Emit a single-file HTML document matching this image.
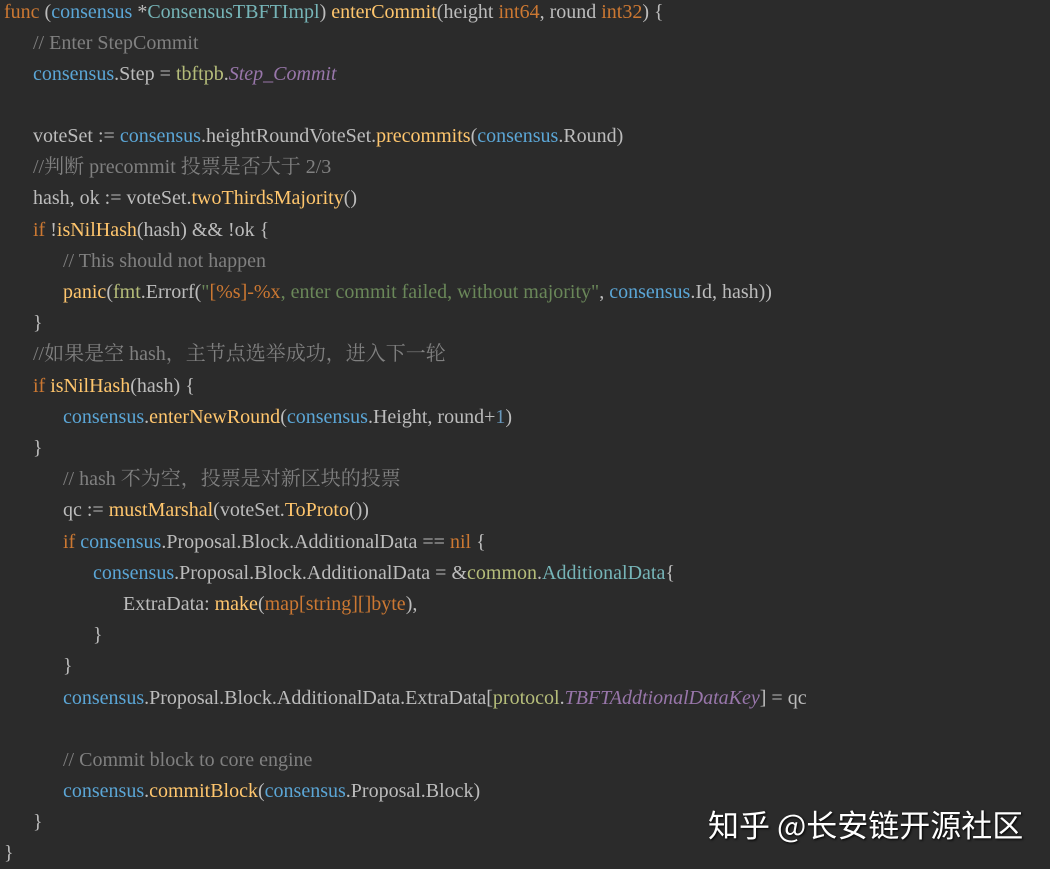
<!DOCTYPE html>
<html><head><meta charset="utf-8"><style>
body{margin:0;width:1050px;height:867px;background:#2b2b2b;overflow:hidden;position:relative;font-family:"Liberation Serif","Noto Serif CJK SC",serif;font-size:20px;color:#bcbcbc}
.l{position:absolute;white-space:pre;height:31px;line-height:31px}
.k{color:#cc7832}.b{color:#5ba6d6}.c{color:#808080}.f{color:#ffc66d}.o{color:#b5bd7a}.p{color:#9876aa;font-style:italic}.s{color:#6a8759}.n{color:#6897bb}.t{color:#76b5b8}
.wm{position:absolute;left:708px;top:801px;font-family:"Noto Sans CJK SC",sans-serif;font-size:31px;color:#fff;white-space:nowrap;text-shadow:1px 1px 2px #000}
</style></head><body>
<div class="l" style="left:4px;top:-3px"><span class="k">func</span> (<span class="b">consensus</span> *<span class="t">ConsensusTBFTImpl</span>) <span class="f">enterCommit</span>(height <span class="k">int64</span>, round <span class="k">int32</span>) {</div>
<div class="l c" style="left:33px;top:28px">// Enter StepCommit</div>
<div class="l" style="left:33px;top:59px"><span class="b">consensus</span>.Step = <span class="o">tbftpb</span>.<span class="p">Step_Commit</span></div>
<div class="l" style="left:33px;top:121px">voteSet := <span class="b">consensus</span>.heightRoundVoteSet.<span class="f">precommits</span>(<span class="b">consensus</span>.Round)</div>
<div class="l c" style="left:33px;top:152px">//判断 precommit 投票是否大于 2/3</div>
<div class="l" style="left:33px;top:183px">hash, ok := voteSet.<span class="f">twoThirdsMajority</span>()</div>
<div class="l" style="left:33px;top:215px"><span class="k">if</span> !<span class="f">isNilHash</span>(hash) &amp;&amp; !ok {</div>
<div class="l c" style="left:63px;top:246px">// This should not happen</div>
<div class="l" style="left:63px;top:277px"><span class="f">panic</span>(<span class="o">fmt</span>.Errorf(<span class="s">"</span><span class="k">[%s]-%x</span><span class="s">, enter commit failed, without majority"</span>, <span class="b">consensus</span>.Id, hash))</div>
<div class="l" style="left:33px;top:308px">}</div>
<div class="l c" style="left:33px;top:339px">//如果是空 hash，主节点选举成功，进入下一轮</div>
<div class="l" style="left:33px;top:371px"><span class="k">if</span> <span class="f">isNilHash</span>(hash) {</div>
<div class="l" style="left:63px;top:402px"><span class="b">consensus</span>.<span class="f">enterNewRound</span>(<span class="b">consensus</span>.Height, round+<span class="n">1</span>)</div>
<div class="l" style="left:33px;top:433px">}</div>
<div class="l c" style="left:63px;top:464px">// hash 不为空，投票是对新区块的投票</div>
<div class="l" style="left:63px;top:495px">qc := <span class="f">mustMarshal</span>(voteSet.<span class="f">ToProto</span>())</div>
<div class="l" style="left:63px;top:527px"><span class="k">if</span> <span class="b">consensus</span>.Proposal.Block.AdditionalData == <span class="k">nil</span> {</div>
<div class="l" style="left:93px;top:558px"><span class="b">consensus</span>.Proposal.Block.AdditionalData = &amp;<span class="o">common</span>.<span class="t">AdditionalData</span>{</div>
<div class="l" style="left:123px;top:589px">ExtraData: <span class="f">make</span>(<span class="k">map[string][]byte</span>),</div>
<div class="l" style="left:93px;top:620px">}</div>
<div class="l" style="left:63px;top:651px">}</div>
<div class="l" style="left:63px;top:683px"><span class="b">consensus</span>.Proposal.Block.AdditionalData.ExtraData[<span class="o">protocol</span>.<span class="p">TBFTAddtionalDataKey</span>] = qc</div>
<div class="l c" style="left:63px;top:745px">// Commit block to core engine</div>
<div class="l" style="left:63px;top:776px"><span class="b">consensus</span>.<span class="f">commitBlock</span>(<span class="b">consensus</span>.Proposal.Block)</div>
<div class="l" style="left:33px;top:807px">}</div>
<div class="l" style="left:4px;top:838px">}</div>
<div class="wm">知乎 @长安链开源社区</div>
</body></html>
